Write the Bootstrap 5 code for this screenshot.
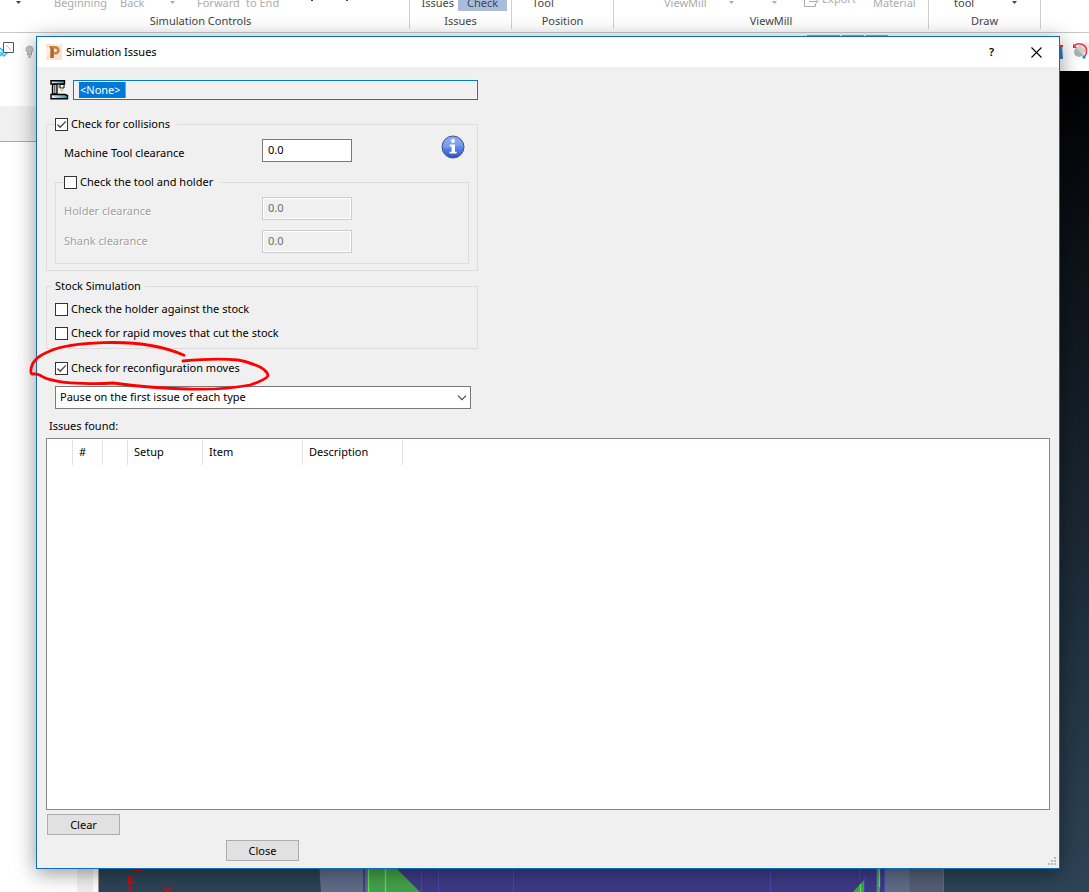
<!DOCTYPE html>
<html lang="en">
<head>
<meta charset="utf-8">
<meta name="viewport" content="width=device-width, initial-scale=1">
<title>Simulation Issues</title>
<link href="https://cdn.jsdelivr.net/npm/bootstrap@5.3.0/dist/css/bootstrap.min.css" rel="stylesheet">
<style>
  body { font-family: "Noto Sans", "Open Sans", sans-serif; font-size: 11px; line-height: 18px; color: #000; background: #fff; }
  svg { display: block; flex: none; }
  button { font: inherit; color: inherit; }

  /* ribbon */
  .ribbon { height: 33px; border-bottom: 1px solid #c8c8c8; color: #444; line-height: 16px; }
  .ribbon-group { width: 102px; height: 29px; border-right: 1px solid #d0d0d0; }
  .ribbon-group.controls { width: 410px; }
  .ribbon-group.viewmill { width: 315px; }
  .ribbon-group.draw { width: 112px; }
  .ribbon-row { display: grid; grid-template-rows: 11px; height: 11px; margin-bottom: 2px; align-items: end; justify-content: start; }
  .controls .ribbon-row { grid-template-columns: 54px 66px 50px 27px 49px 65px 35px 20px; }
  .issues .ribbon-row { grid-template-columns: 48px 49px; }
  .position .ribbon-row { grid-template-columns: 62px; justify-content: start; }
  .viewmill .ribbon-row { grid-template-columns: 50px 65px 43px 31px 70px 50px; }
  .draw .ribbon-row { grid-template-columns: 25px 54px 20px; }
  .ribbon-row button { border: 0; padding: 0; background: none; line-height: 16px; text-align: left; white-space: nowrap; }
  .ribbon-row button:disabled { color: #ababab; }
  .ribbon-row .pressed { background: #a9bcde; text-align: center; }
  .caret-down { width: 5px; height: 3px; background: currentColor; clip-path: polygon(0 0, 100% 0, 50% 100%); margin-bottom: 7px; justify-self: start; }
  .caret-down.pale { color: #ababab; }
  .stem { width: 2px; height: 1px; background: currentColor; margin-bottom: 10px; }

  /* application behind the dialog */
  .toolstrip { height: 38px; }
  .side-pane { width: 99px; border-right: 1px solid #999; }
  .side-tab { height: 36px; margin-top: 35px; background: #f0f0f0; border-bottom: 1px solid #a8a8a8; }
  .side-scroll { width: 16px; margin-left: 77px; background: #f0f0f0; }
  .viewport { background: linear-gradient(#000, #0b1016 20%, #2d4456 100%); }

  /* dialog window laid over the application */
  .sim-window { position: absolute; inset: 36px 29px 23px 36px; min-height: 600px; background: #f0f0f0; border: 1px solid #0f6cb8; box-shadow: 0 4px 20px rgba(0,0,0,.42); }
  .title-row { height: 30px; background: #fff; padding-left: 9px; }
  .title-row button { width: 45px; height: 30px; border: 0; padding: 0; background: none; }
  .win-body { padding: 13px 9px 7px; }
  .form-col { max-width: 432px; }
  .machine-field { height: 20px; border: 1px solid #0078d7; background: #f0f0f0; padding: 1px; box-shadow: inset 0 0 0 1px #f8f8f8; }
  .machine-field input { border: 0; padding: 0 0 0 1px; margin-left: 4px; width: 47px; height: 16px; line-height: 16px; background: #0078d7; color: #fff; border-right: 1px solid #f08020; outline: 0; }
  fieldset.group-frame { border: 1px solid #dcdcdc; border-radius: 0; padding: 0 8px; }
  .group-frame > legend { float: none; width: auto; height: 18px; margin: 0; padding: 0 7px 0 0; font-size: 11px; line-height: 18px; }
  .group-frame > legend.text-only { padding: 0 4px; margin-left: -4px; }
  .tick { display: flex; align-items: center; gap: 3px; height: 18px; }
  .tick input { appearance: none; width: 13px; height: 13px; margin: 0; flex: none; border: 1px solid #333; background: #fff; border-radius: 0; }
  .tick input:checked { background: #fff url("data:image/svg+xml,%3Csvg xmlns='http://www.w3.org/2000/svg' viewBox='0 0 11 11'%3E%3Cpath d='M1.5 5.5l2.7 2.7L9.8 2.4' fill='none' stroke='%23444' stroke-width='1.3'/%3E%3C/svg%3E"); }
  .tick-row { height: 24px; }
  .value-field { width: 90px; height: 23px; padding: 0 5px 2px; border: 1px solid #7a7a7a; border-radius: 0; background: #fff; }
  .value-field:disabled { border-color: #ccc; background: #f0f0f0; box-shadow: inset 0 0 0 1px #fff; color: #6d6d6d; }
  .field-name { width: 198px; padding-top: 5px; }
  .field-name.level { padding-top: 2px; }
  .dimmed { color: #a0a0a0; text-shadow: 1px 1px 0 #fff; }
  .pause-select { width: 416px; height: 23px; border: 1px solid #7a7a7a; border-radius: 0; appearance: none; padding: 0 20px 1px 4px; color: #000;
    background: #fff url("data:image/svg+xml,%3Csvg xmlns='http://www.w3.org/2000/svg' viewBox='0 0 10 6'%3E%3Cpath d='M1 .7l4 4 4-4' fill='none' stroke='%23444' stroke-width='1.1'/%3E%3C/svg%3E") no-repeat right 3px center / 10px 6px; }
  .ink { position: absolute; left: -18px; top: -16px; pointer-events: none; z-index: 2; }
  .issue-list { border: 1px solid #828790; background: #fff; min-height: 60px; }
  .issue-list table { table-layout: fixed; width: 356px; margin: 1px 0 0; border-collapse: separate; border-spacing: 0; }
  .issue-list th { height: 25px; padding: 0 0 1px 6px; font-weight: 400; border-right: 1px solid #e2e2e2; }
  .push { width: 73px; height: 21px; padding: 0; border: 1px solid #adadad; background: #e1e1e1; line-height: 18px; }
  .close-btn { margin-left: 180px; }
  .grip { position: absolute; right: 3px; bottom: 2px; }
</style>
<script src="https://cdn.jsdelivr.net/npm/bootstrap@5.3.0/dist/js/bootstrap.bundle.min.js"></script>
</head>
<body>
<div class="position-relative vh-100 overflow-hidden d-flex flex-column">

  <header class="ribbon d-flex flex-shrink-0">
    <div class="ribbon-group controls">
      <div class="ribbon-row">
        <span class="caret-down ms-3 ps-1"></span>
        <button disabled>Beginning</button>
        <button disabled>Back</button>
        <span class="caret-down pale"></span>
        <button disabled>Forward</button>
        <button disabled>to End</button>
        <span class="stem"></span><span class="stem"></span>
      </div>
      <div class="text-center pe-2">Simulation Controls</div>
    </div>
    <div class="ribbon-group issues">
      <div class="ribbon-row"><button class="text-end pe-1">Issues</button><button class="pressed">Check</button></div>
      <div class="text-center">Issues</div>
    </div>
    <div class="ribbon-group position">
      <div class="ribbon-row"><button class="text-center">Tool</button></div>
      <div class="text-center">Position</div>
    </div>
    <div class="ribbon-group viewmill">
      <div class="ribbon-row">
        <span></span><button disabled>ViewMill</button>
        <span class="caret-down pale"></span>
        <span class="caret-down pale"></span>
        <button disabled class="d-flex align-items-end pb-1">
          <svg width="19" height="12" viewBox="0 0 19 12" fill="none" stroke="#ababab"><path d="M1.500 0v11.500h11V9M6 6.500h8M11.500 3l3.500 3.500L11.500 10"/></svg>Export</button>
        <button disabled>Material</button>
      </div>
      <div class="text-center">ViewMill</div>
    </div>
    <div class="ribbon-group draw">
      <div class="ribbon-row"><span></span><button>tool</button><span class="caret-down ms-1"></span></div>
      <div class="text-center">Draw</div>
    </div>
  </header>

  <div class="toolstrip d-flex flex-shrink-0 justify-content-between">
    <svg width="36" height="38" viewBox="0 33 36 38" fill="none">
      <path d="M0 48l4 4-4 4M8 52l-4 4-4-4" stroke="#20bfe4" stroke-width="1.500"/>
      <path d="M3.500 42.500h10v10h-10z" fill="#fff" stroke="#555"/><path d="M6 45l5 5" stroke="#bbb"/>
      <path d="M29.500 46a3.500 3.500 0 0 1 2 6.300V55h-4v-2.700a3.500 3.500 0 0 1 2-6.300z" fill="#c8c8c8" stroke="#a5a5a5"/><path d="M28 57h3" stroke="#888"/>
    </svg>
    <svg width="284" height="38" viewBox="805 33 284 38" fill="none">
      <path d="M807 35.500h33M842 35.500h22M866 35.500h22" stroke="#9aa3b0"/>
      <path d="M1057 48l5-3 1 14h-6z" fill="#2d80c4"/><path d="M1058 46h5" stroke="#e33" stroke-width="2"/>
      <path d="M1081 45l5-3 4 4-3 4z" fill="#e4e4e4"/><circle cx="1079" cy="52" r="5" fill="#b0b0b0"/><path d="M1076 48l4-3 6 5-3 5z" fill="#cfcfcf"/>
      <path d="M1074 46c4-4 10-2 12 2 1 3 1 5-1 8" stroke="#f5333a" stroke-width="1.600"/><path d="M1073 43.500v4.500h4z" fill="#f5333a"/><circle cx="1084" cy="57" r="1.700" fill="#2786d8"/>
    </svg>
  </div>

  <div class="d-flex flex-grow-1">
    <aside class="side-pane d-flex flex-column flex-shrink-0"><div class="side-tab"></div><div class="side-scroll flex-grow-1"></div></aside>
    <main class="viewport flex-grow-1 d-flex align-items-end overflow-hidden">
      <svg width="990" height="30" viewBox="99 862 990 30" aria-hidden="true">
        <path d="M319 862l2 30h623v-30z" fill="#5f6c89"/><path d="M909 862l1 30h33v-30z" fill="#555e75"/>
        <path d="M363 862h522l-1 30H363z" fill="#3d3b87"/>
        <path d="M365 862h3v30h-3z" fill="#65657c"/>
        <path d="M368 862h22l30 30h-52z" fill="#43a24a"/>
        <path d="M853 892l11-12v12zM877 862h3v30h-3z" fill="#43a24a"/>
        <path d="M368.500 862v30M385.500 862v30M860.500 884v8M879.500 862v25" stroke="#5be35e" stroke-width="1.300"/>
        <path d="M364 862v30M421.500 862v30M438.500 862v30M513.500 862v30M770.500 862v30M859.500 862v18M864.500 878v14M876.500 862v30M884.500 862v30" stroke="#4a48ae"/>
        <path d="M130 892v-9m-2 0h4l-2-8zM134 870.500h8M163 887.500l4 3 4-3" fill="none" stroke="#e00" stroke-width="1.500"/>
      </svg>
    </main>
  </div>

  <section class="sim-window d-flex flex-column" role="dialog" aria-labelledby="winTitle">
    <div class="title-row d-flex align-items-center flex-shrink-0">
      <svg width="16" height="16" viewBox="0 0 16 16"><path d="M0 0h16v16H0z" fill="#fbe3cf"/><path d="M0 5l8-5h8L0 13z" fill="#fdf0e4"/><path d="M3 2h6.500a4.300 4.300 0 0 1 0 8.600H7.700V14H4.500V4.500zM7.700 4.700v3.400h1.600a1.700 1.700 0 0 0 0-3.400z" fill="#c98545" fill-rule="evenodd"/><path d="M3 2l4.700 2.700V14H4.500V4.500z" fill="#a8682f"/></svg>
      <span id="winTitle" class="ps-1">Simulation Issues</span>
      <button class="ms-auto fw-semibold" aria-label="Help">?</button>
      <button aria-label="Close window"><svg class="mx-auto" width="11" height="11" viewBox="0 0 11 11"><path d="M.5.5l10 10M10.500.5l-10 10" stroke="#000" stroke-width="1.100"/></svg></button>
    </div>

    <div class="win-body d-flex flex-column flex-grow-1">
      <div class="form-col">
        <div class="d-flex">
          <svg class="ms-1 me-1" width="19" height="20" viewBox="0 0 19 20">
            <defs><linearGradient id="steel"><stop stop-color="#f2f5f6"/><stop offset="1" stop-color="#338ca5"/></linearGradient></defs>
            <path d="M2.500 4H7v10H2.500z" fill="#cfcfcf" stroke="#000" stroke-width="1.300"/><path d="M4.700 5v8" stroke="#555"/>
            <path d="M1 .7h13.500v3.300H1z" fill="url(#steel)" stroke="#000" stroke-width="1.400"/>
            <path d="M10 4.500h4V8h-4z" fill="#fff" stroke="#000"/><path d="M11 8.500h2v3h-2z" fill="#e8cf51"/><path d="M8 4.500v4" stroke="#777"/>
            <path d="M1 14.500h14l2.500 1v3.200H1z" fill="url(#steel)" stroke="#000" stroke-width="1.400"/>
          </svg>
          <div class="machine-field flex-grow-1"><input class="d-block" type="text" value="&lt;None&gt;" aria-label="Machine tool"></div>
        </div>

        <fieldset class="group-frame" style="margin-top:15px;padding-bottom:6px">
          <legend><label class="tick"><input type="checkbox" checked>Check for collisions</label></legend>
          <div class="d-flex align-items-start" style="padding:6px 0 0 9px">
            <label class="field-name" for="mtc">Machine Tool clearance</label>
            <input id="mtc" class="value-field" type="text" value="0.0">
            <svg class="ms-auto" style="margin:-4px 4px 0 0" width="24" height="24" viewBox="0 0 24 24" role="img" aria-label="Information">
              <defs><linearGradient id="orb" x2="0" y2="1"><stop stop-color="#7fa5f5"/><stop offset=".5" stop-color="#6289ec"/><stop offset="1" stop-color="#3050bd"/></linearGradient></defs>
              <circle cx="12" cy="12" r="11" fill="url(#orb)" stroke="#45577f"/><path d="M2 12a10 10 0 0 1 20 0c-6-4-14 4-20 0z" fill="#fff" opacity=".14"/>
              <circle cx="12" cy="6" r="1.900" fill="#fff"/><path d="M8.800 9.500H14v7.200h1.600v1.800H8.500v-1.800h2.100v-5.300H8.800z" fill="#fff"/>
            </svg>
          </div>
          <fieldset class="group-frame" style="margin-top:11px;padding-bottom:10px">
            <legend><label class="tick"><input type="checkbox">Check the tool and holder</label></legend>
            <div class="d-flex align-items-start" style="padding-top:6px">
              <label class="field-name dimmed" for="hc">Holder clearance</label>
              <input id="hc" class="value-field" type="text" value="0.0" disabled>
            </div>
            <div class="d-flex align-items-start" style="padding-top:10px">
              <label class="field-name level dimmed" for="sc">Shank clearance</label>
              <input id="sc" class="value-field" type="text" value="0.0" disabled>
            </div>
          </fieldset>
        </fieldset>

        <fieldset class="group-frame" style="margin-top:6px;padding-bottom:3px">
          <legend class="text-only">Stock Simulation</legend>
          <label class="tick tick-row" style="margin-top:2px"><input type="checkbox">Check the holder against the stock</label>
          <label class="tick tick-row"><input type="checkbox">Check for rapid moves that cut the stock</label>
        </fieldset>

        <div class="position-relative" style="margin-top:7px;padding-left:9px">
          <label class="tick tick-row"><input type="checkbox" checked>Check for reconfiguration moves</label>
          <svg class="ink" width="245" height="54" viewBox="28 340 245 54" aria-hidden="true"><path d="M184 355.300Q152 341 103 342.700Q66 344 50 351Q34 357 31.500 367Q30 373 32 374Q38 373 43 377Q56 383 83 383.300Q98 384 113 383Q149 388 187 389Q225 390 250 385Q268 379 268 375Q267 371 260 367Q246 361 238 360Q215 358 183 361" fill="none" stroke="#f00" stroke-width="2.800" stroke-linecap="round" stroke-linejoin="round"/></svg>
        </div>
        <div style="margin-top:6px;padding-left:9px">
          <select class="pause-select d-block" aria-label="Pause behaviour"><option>Pause on the first issue of each type</option></select>
        </div>
      </div>

      <div id="found" style="margin:8px 0 3px 3px">Issues found:</div>
      <div class="issue-list flex-grow-1">
        <table aria-labelledby="found">
          <colgroup><col style="width:26px"><col style="width:30px"><col style="width:25px"><col style="width:75px"><col style="width:100px"><col style="width:100px"></colgroup>
          <thead><tr><th></th><th>#</th><th></th><th>Setup</th><th>Item</th><th>Description</th></tr></thead>
        </table>
      </div>
      <div style="margin:4px 0 5px 1px"><button class="push d-block">Clear</button></div>
      <button class="push close-btn">Close</button>
    </div>
    <svg class="grip" width="9" height="9" viewBox="0 0 9 9" fill="#bcbcbc"><path d="M7 0h2v2H7zM4 3h2v2H4zM7 3h2v2H7zM1 6h2v2H1zM4 6h2v2H4zM7 6h2v2H7z"/></svg>
  </section>
</div>
</body>
</html>
